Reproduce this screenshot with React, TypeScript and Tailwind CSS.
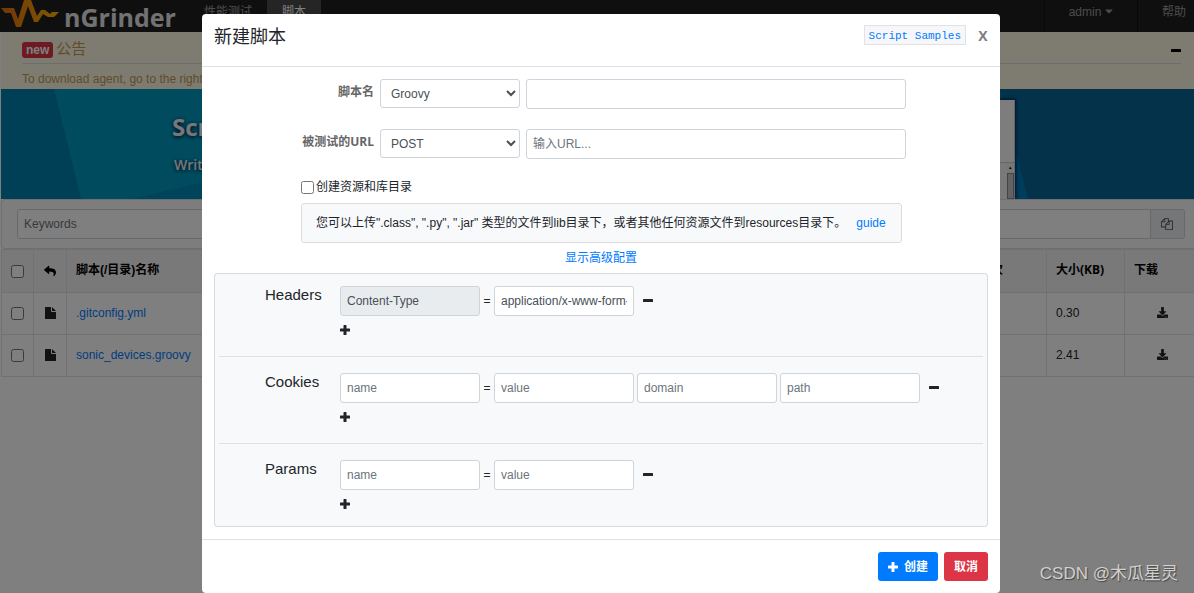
import { useState } from 'react';
import { FaCaretDown, FaDownload, FaReply } from 'react-icons/fa';

type Section = {
  title: string;
  fields: string[];
  preset?: { name: string; value: string };
};

const sections: Section[] = [
  { title: 'Headers', fields: [], preset: { name: 'Content-Type', value: 'application/x-www-form-urlencoded' } },
  { title: 'Cookies', fields: ['domain', 'path'] },
  { title: 'Params', fields: [] },
];

const files = [
  { name: '.gitconfig.yml', size: '0.30' },
  { name: 'sonic_devices.groovy', size: '2.41' },
];

const control = 'h-[30px] rounded-[3px] border border-[#ced4da] px-[6px] text-xs text-[#495057] placeholder:text-[#6c757d]';

function PlusIcon() {
  return (
    <svg className="h-[10px] w-[10px]" viewBox="0 0 20 20" fill="currentColor" aria-hidden="true">
      <path d="M8 0h4q1 0 1 1v6h6q1 0 1 1v4q0 1-1 1h-6v6q0 1-1 1H8q-1 0-1-1v-6H1q-1 0-1-1V8q0-1 1-1h6V1q0-1 1-1z" />
    </svg>
  );
}

function MinusIcon() {
  return (
    <svg className="h-[10px] w-[10px]" viewBox="0 0 20 20" fill="currentColor" aria-hidden="true">
      <rect y="6" width="20" height="6" rx="1" />
    </svg>
  );
}

function FileIcon() {
  return (
    <svg className="mx-auto h-3 w-[11px]" viewBox="0 0 22 24" fill="currentColor" aria-hidden="true">
      <path d="M1 0h11v8q0 2 2 2h8v13q0 1-1 1H1q-1 0-1-1V1q0-1 1-1z" />
      <path d="M14 0l8 8h-8z" />
    </svg>
  );
}

function Logo() {
  return (
    <a href="#home" className="flex h-8 w-[202px] items-start">
      <svg className="h-8 w-[60px] shrink-0" viewBox="0 0 60 32" aria-hidden="true">
        <defs>
          <linearGradient id="wave" x1="0" x2="1" y1="0" y2="0">
            <stop offset="0" stopColor="#e86a10" />
            <stop offset="1" stopColor="#fcb800" />
          </linearGradient>
        </defs>
        <path
          d="M1 8H14L18 19L24 0H31L37 16L41 10H45L50 14L52 12H59L54 17H48L43 14L38 22H34L28 6L21 27H16L11 13H5Z"
          fill="url(#wave)"
        />
      </svg>
      <span className="pl-1 font-['Open_Sans',sans-serif] text-[25px] leading-[34px] font-bold text-[#e4e4e4]">nGrinder</span>
    </a>
  );
}

function NavBar() {
  return (
    <nav className="flex h-8 items-start bg-[#1f1f1f] text-xs text-[#999]">
      <Logo />
      <a href="#perftest" className="ml-[2px] w-[63px] leading-6">性能测试</a>
      <a href="#script" className="h-8 w-[54px] bg-[#4a4a4a] text-center leading-6 text-white">脚本</a>
      <div className="ml-auto flex h-8">
        <button type="button" className="flex h-8 w-[93px] justify-center gap-1 border-l border-[#111] leading-6">
          admin
          <FaCaretDown className="mt-[5px] h-3 w-2" />
        </button>
        <a href="#help" className="w-[65px] border-l border-[#111] pl-6 leading-6">帮助</a>
      </div>
    </nav>
  );
}

function Announcement() {
  return (
    <section className="ml-px h-[57px] bg-[#fcf8e3] px-[21px] pt-2 text-xs text-[#c09853]">
      <div className="flex h-6 items-start border-b border-[#dcdcdc]">
        <span className="mt-[2px] rounded-[3px] bg-[#dc3545] px-1 text-xs leading-4 font-bold text-white">new</span>
        <span className="ml-[3px] text-[15px] leading-[18px]">公告</span>
        <button type="button" aria-label="Collapse" className="mt-[6px] ml-auto text-black">
          <MinusIcon />
        </button>
      </div>
      <p className="mt-[6px] leading-[18px]">To download agent, go to the right top menu.</p>
    </section>
  );
}

function Banner() {
  return (
    <section className="relative ml-px flex h-[110px] justify-between overflow-hidden bg-[#086496] font-['Open_Sans',sans-serif] text-[#eee]">
      <svg className="absolute inset-0 h-full w-full" viewBox="0 0 1201 110" preserveAspectRatio="none" aria-hidden="true">
        <path d="M0 0H999L1027 110H0Z" fill="#0078b8" />
        <path d="M53 0H600L132 110H80Z" fill="#0098bc" />
        <path d="M0 0H53L80 110H0Z" fill="#0080ae" />
        <path d="M132 110L600 0V110Z" fill="#0088b8" />
      </svg>
      <div className="relative pt-5 pl-[171px] [text-shadow:0_1px_4px_#003]">
        <h2 className="text-2xl leading-9 font-bold">Script</h2>
        <p className="mt-2 pl-[2px] text-sm leading-6 font-semibold">Write scripts</p>
      </div>
      <div className="relative mt-[11px] mr-[187px] flex w-[120px] flex-col border-r border-[#ccc] bg-[#fafafa] shadow-[0_0_3px_1px_#002050]">
        <div className="h-[62px]" />
        <div className="flex flex-1 flex-col items-end border-t border-[#ccc] bg-[#f0f3f3]">
          <span className="flex h-[10px] w-2 items-center justify-center bg-[#eee] text-[5px] text-black">▴</span>
          <span className="w-[7px] flex-1 border border-[#888] bg-[#c4c4c4]" />
        </div>
      </div>
    </section>
  );
}

function SearchBar() {
  return (
    <div className="ml-px flex h-[50px] rounded-[4px] border border-[#dedede] bg-[#fafafa] py-[9px] pr-4 pl-[15px]">
      <input
        type="text"
        aria-label="Keywords"
        placeholder="Keywords"
        className="h-[30px] min-w-0 flex-1 rounded-l-[3px] border border-[#ced4da] bg-white px-[6px] text-xs placeholder:text-[#6c757d]"
      />
      <button
        type="button"
        aria-label="Copy"
        className="flex h-[30px] w-[34px] items-center justify-center rounded-r-[3px] border border-l-0 border-[#ced4da] bg-[#e9ecef] pr-[2px] text-[#495057]"
      >
        <svg className="h-3 w-3" viewBox="0 0 1792 1792" fill="currentColor" aria-hidden="true">
          <path d="M1696 384q40 0 68 28t28 68v1216q0 40-28 68t-68 28h-960q-40 0-68-28t-28-68v-288h-544q-40 0-68-28t-28-68v-672q0-40 20-88t48-76l408-408q28-28 76-48t88-20h416q40 0 68 28t28 68v328q68-40 128-40h416zm-544 213l-299 299h299v-299zm-640-384l-299 299h299v-299zm196 647l316-316v-416h-384v416q0 40-28 68t-68 28h-416v640h512v-256q0-40 20-88t48-76zm956 804v-1152h-384v416q0 40-28 68t-68 28h-416v640h896z" />
        </svg>
      </button>
    </div>
  );
}

function FileTable() {
  return (
    <table className="w-full table-fixed border-collapse text-left text-xs text-[#212529] [&_td]:border [&_td]:border-[#dee2e6] [&_th]:border [&_th]:border-[#dee2e6]">
      <colgroup>
        <col className="w-8" />
        <col className="w-[33px]" />
        <col />
        <col className="w-[78px]" />
        <col className="w-[78px]" />
        <col className="w-[77px]" />
      </colgroup>
      <thead>
        <tr className="h-[43px] bg-[#f2f2f2] text-black">
          <th className="pl-[9px]"><input type="checkbox" aria-label="Select all" className="block" /></th>
          <th><FaReply className="mx-auto h-3 w-3" /></th>
          <th className="px-[9px] pb-[2px]">脚本(/目录)名称</th>
          <th className="px-[10px] pb-[2px]">版次</th>
          <th className="px-[9px] pb-[2px] font-['Open_Sans','Noto_Sans_CJK_SC',sans-serif]">大小(KB)</th>
          <th className="px-[9px] pb-[2px]">下载</th>
        </tr>
      </thead>
      <tbody>
        {files.map((file) => (
          <tr key={file.name} className="h-[42px]">
            <td className="pl-[9px]"><input type="checkbox" aria-label={file.name} className="block" /></td>
            <td className="pb-[2px]"><FileIcon /></td>
            <td className="px-[9px] pb-[2px]"><a href="#file" className="text-[#007bff]">{file.name}</a></td>
            <td />
            <td className="px-[9px] pb-[2px]">{file.size}</td>
            <td className="pr-[2px] pb-[2px]"><FaDownload className="mx-auto h-[11px] w-[11px]" /></td>
          </tr>
        ))}
      </tbody>
    </table>
  );
}

function SectionRow({ title, fields, preset }: Section) {
  return (
    <div className="flex border-b border-[#dee2e6] pt-4 pb-[17px] pl-[46px] first:pt-3 last:border-b-0 last:pb-[13px]">
      <h3 className="w-[75px] shrink-0 text-[15px] leading-[18px]">{title}</h3>
      <div>
        <div className="flex items-center">
          <input
            type="text"
            aria-label={`${title} name`}
            placeholder="name"
            defaultValue={preset?.name}
            readOnly={!!preset}
            className={`${control} w-[140px] ${preset ? 'bg-[#e9ecef]' : 'bg-white'}`}
          />
          <span className="w-[14px] text-center">=</span>
          <input
            type="text"
            aria-label={`${title} value`}
            placeholder="value"
            defaultValue={preset?.value}
            className={`${control} w-[140px] bg-white`}
          />
          {fields.map((field) => (
            <input
              key={field}
              type="text"
              aria-label={`${title} ${field}`}
              placeholder={field}
              className={`${control} ml-[3px] w-[140px] bg-white`}
            />
          ))}
          <button type="button" aria-label={`Remove ${title}`} className="ml-[9px]">
            <MinusIcon />
          </button>
        </div>
        <button type="button" aria-label={`Add ${title}`} className="mt-[5px] flex h-[18px] items-center">
          <PlusIcon />
        </button>
      </div>
    </div>
  );
}

function CreateScriptDialog() {
  const [language, setLanguage] = useState('Groovy');
  const [method, setMethod] = useState('POST');

  return (
    <div role="dialog" aria-labelledby="dialog-title" className="w-[798px] rounded-[4px] bg-white text-xs leading-[18px] text-[#212529]">
      <header className="flex h-[53px] items-start border-b border-[#dee2e6] px-3 pt-[11px]">
        <h1 id="dialog-title" className="text-[18px] leading-6">新建脚本</h1>
        <a
          href="#samples"
          className="ml-auto h-5 border border-[#e1e1e8] bg-[#f7f7f9] px-1 font-['Liberation_Mono',monospace] text-[11px] leading-5 text-[#007bff]"
        >
          Script Samples
        </a>
        <button type="button" aria-label="Close" className="ml-3 w-[10px] font-['Open_Sans',sans-serif] text-sm leading-[22px] font-bold text-[#7f7f7f]">
          X
        </button>
      </header>

      <div className="p-3">
        <div className="flex items-start gap-[6px]">
          <label htmlFor="script-name" className="w-[160px] pt-1 text-right font-bold text-[#666]">脚本名</label>
          <select
            aria-label="Language"
            value={language}
            onChange={(e) => setLanguage(e.target.value)}
            className="h-[29px] w-[140px] rounded-[3px] border border-[#ced4da] bg-white px-[6px] text-[#495057]"
          >
            <option>Groovy</option>
            <option>Jython</option>
          </select>
          <input id="script-name" type="text" className={`${control} w-[380px] bg-white`} />
        </div>
        <div className="mt-5 flex items-start gap-[6px]">
          <label htmlFor="test-url" className="w-[160px] pt-1 text-right font-['Open_Sans','Noto_Sans_CJK_SC',sans-serif] font-bold text-[#666]">
            被测试的URL
          </label>
          <select
            aria-label="Method"
            value={method}
            onChange={(e) => setMethod(e.target.value)}
            className="h-[29px] w-[140px] rounded-[3px] border border-[#ced4da] bg-white px-[6px] text-[#495057]"
          >
            <option>GET</option>
            <option>POST</option>
          </select>
          <input id="test-url" type="text" placeholder="输入URL..." className={`${control} w-[380px] bg-white`} />
        </div>

        <label className="mt-[19px] ml-[87px] flex h-[18px] items-center gap-[2px]">
          <input type="checkbox" className="h-[13px] w-[13px]" />
          创建资源和库目录
        </label>
        <div className="mt-[7px] ml-[87px] flex h-10 w-[601px] items-center rounded-[3px] border border-[#dcdcdc] bg-[#f8f9fb] px-[14px] whitespace-nowrap">
          您可以上传".class", ".py", ".jar" 类型的文件到lib目录下，或者其他任何资源文件到resources目录下。
          <a href="#guide" className="ml-[10px] text-[#007bff]">guide</a>
        </div>
        <div className="mt-[6px] text-center">
          <a href="#advanced" className="text-[#007bff]">显示高级配置</a>
        </div>

        <div className="mt-[6px] rounded-[3px] border border-[#d8dadc] bg-[#f8f9fb] px-1">
          {sections.map((section) => (
            <SectionRow key={section.title} {...section} />
          ))}
        </div>
      </div>

      <footer className="flex justify-end gap-[6px] border-t border-[#dee2e6] p-3 font-bold text-white">
        <button type="button" className="flex h-[29px] w-[60px] items-center justify-center gap-[6px] rounded-[3px] bg-[#007bff]">
          <PlusIcon />
          创建
        </button>
        <button type="button" className="h-[29px] w-11 rounded-[3px] bg-[#dc3545]">取消</button>
      </footer>
    </div>
  );
}

export default function App() {
  return (
    <div className="relative min-h-screen overflow-hidden bg-white font-['Liberation_Sans','Noto_Sans_CJK_SC',sans-serif]">
      <div className="-mr-2">
        <NavBar />
        <Announcement />
        <Banner />
        <SearchBar />
        <div className="ml-px">
          <FileTable />
        </div>
      </div>

      {/* Modal backdrop */}
      <div className="absolute inset-y-0 -right-2 left-0 flex items-start justify-center bg-black/50 pt-[14px]">
        <CreateScriptDialog />
      </div>

      <span className="absolute right-4 bottom-[7px] text-[17px] leading-6 text-[#d0d0d0] [text-shadow:1px_1px_1px_#444]">CSDN @木瓜星灵</span>
    </div>
  );
}
